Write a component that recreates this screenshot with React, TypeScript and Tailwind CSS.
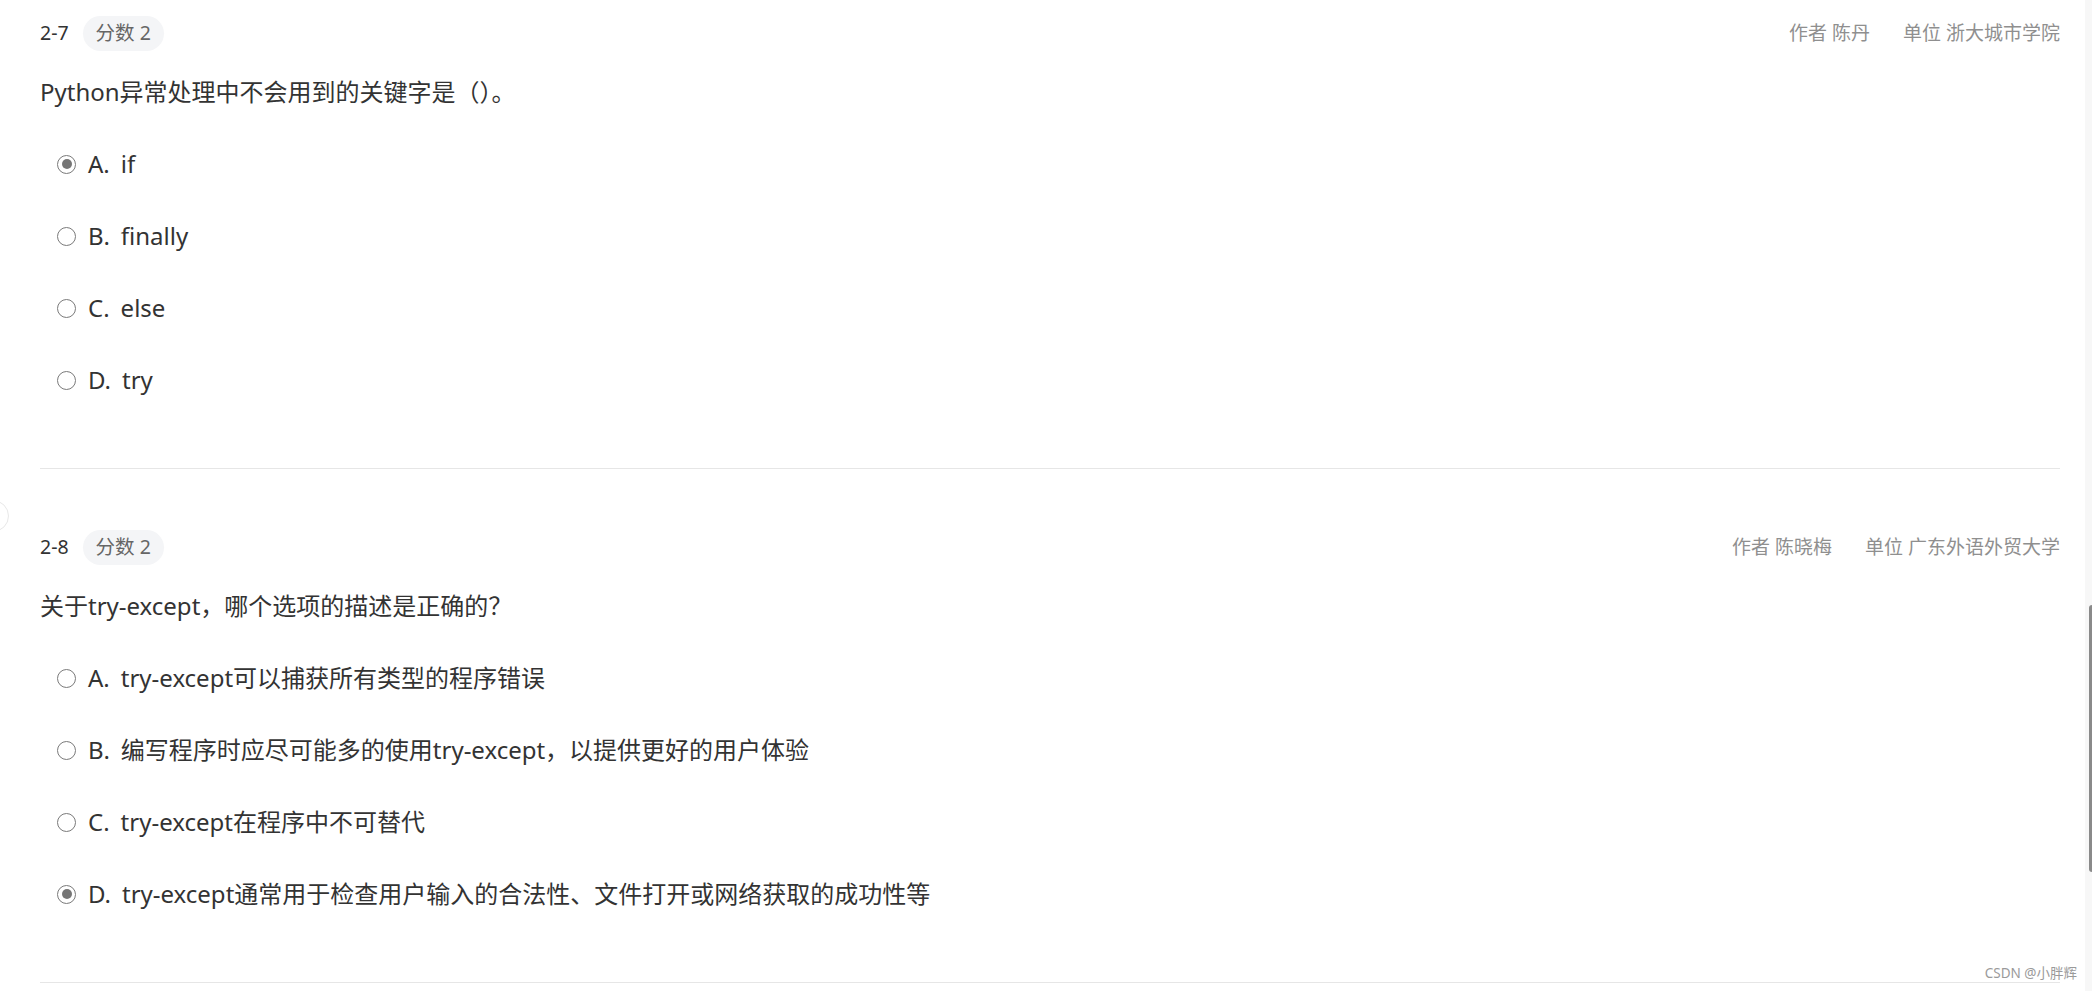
import React from "react";

type Question = {
  id: string;
  score: number;
  author: string;
  unit: string;
  title: string;
  options: string[];
  picked: number;
};

const questions: Question[] = [
  {
    id: "2-7",
    score: 2,
    author: "陈丹",
    unit: "浙大城市学院",
    title: "Python异常处理中不会用到的关键字是（）。",
    options: ["if", "finally", "else", "try"],
    picked: 0,
  },
  {
    id: "2-8",
    score: 2,
    author: "陈晓梅",
    unit: "广东外语外贸大学",
    title: "关于try-except，哪个选项的描述是正确的？",
    options: [
      "try-except可以捕获所有类型的程序错误",
      "编写程序时应尽可能多的使用try-except，以提供更好的用户体验",
      "try-except在程序中不可替代",
      "try-except通常用于检查用户输入的合法性、文件打开或网络获取的成功性等",
    ],
    picked: 3,
  },
];

const letters = ["A", "B", "C", "D"];

function Radio({ checked }: { checked: boolean }) {
  return (
    <span className="w-[19px] h-[19px] rounded-full border-[1.5px] border-[#7a7a7a] bg-white flex items-center justify-center shrink-0">
      {checked && <span className="w-[10px] h-[10px] rounded-full bg-[#767676]"></span>}
    </span>
  );
}

function QuestionBlock({ q, first }: { q: Question; first: boolean }) {
  return (
    <div className={`${first ? "pt-[15px]" : "pt-[60px]"} pb-[52px] border-b border-[#e6e6e6]`}>
      {/* header */}
      <div className="h-[36px] flex items-center justify-between">
        <div className="flex items-center">
          <span className="text-[19.5px] text-[#333]">{q.id}</span>
          <span className="ml-[14px] h-[35px] px-[13px] rounded-full bg-[#f4f5f7] text-[19.5px] text-[#666] flex items-center">
            分数 {q.score}
          </span>
        </div>
        <div className="flex items-center text-[19px] text-[#8f8f8f]">
          <span>作者 {q.author}</span>
          <span className="ml-[33px]">单位 {q.unit}</span>
        </div>
      </div>

      <div className="mt-[25px] h-[32px] flex items-center text-[24px] text-[#333]">{q.title}</div>

      <div className="mt-[20px]">
        {q.options.map((opt, i) => (
          <div key={i} className="h-[72px] flex items-center pl-[17px] text-[24px] text-[#333]">
            <Radio checked={i === q.picked} />
            <span className="ml-[12px]">{letters[i]}.</span>
            <span className="ml-[11px]">{opt}</span>
          </div>
        ))}
      </div>
    </div>
  );
}

export default function App() {
  return (
    <div
      className="relative w-[2092px] h-[991px] overflow-hidden bg-white flex"
      style={{ fontFamily: '"Noto Sans", "Noto Sans CJK SC", sans-serif' }}
    >
      <div className="flex-1 pl-[40px] pr-[25px]">
        {questions.map((q, i) => (
          <QuestionBlock key={q.id} q={q} first={i === 0} />
        ))}
      </div>

      {/* scrollbar */}
      <div className="w-[7px] h-full bg-[#f7f7f7] flex flex-col">
        <div className="h-[605px]"></div>
        <div className="ml-[4px] w-[3px] h-[267px] rounded-l-full bg-[#8a8a8a]"></div>
      </div>

      {/* side toggle */}
      <div className="absolute left-[-23px] top-[500px] w-[32px] h-[32px] rounded-full border border-[#e8e8e8] bg-white"></div>

      {/* watermark */}
      <div className="absolute right-[15px] bottom-[8px] text-[13.5px] text-[#9a9a9a]">CSDN @小胖辉</div>
    </div>
  );
}
